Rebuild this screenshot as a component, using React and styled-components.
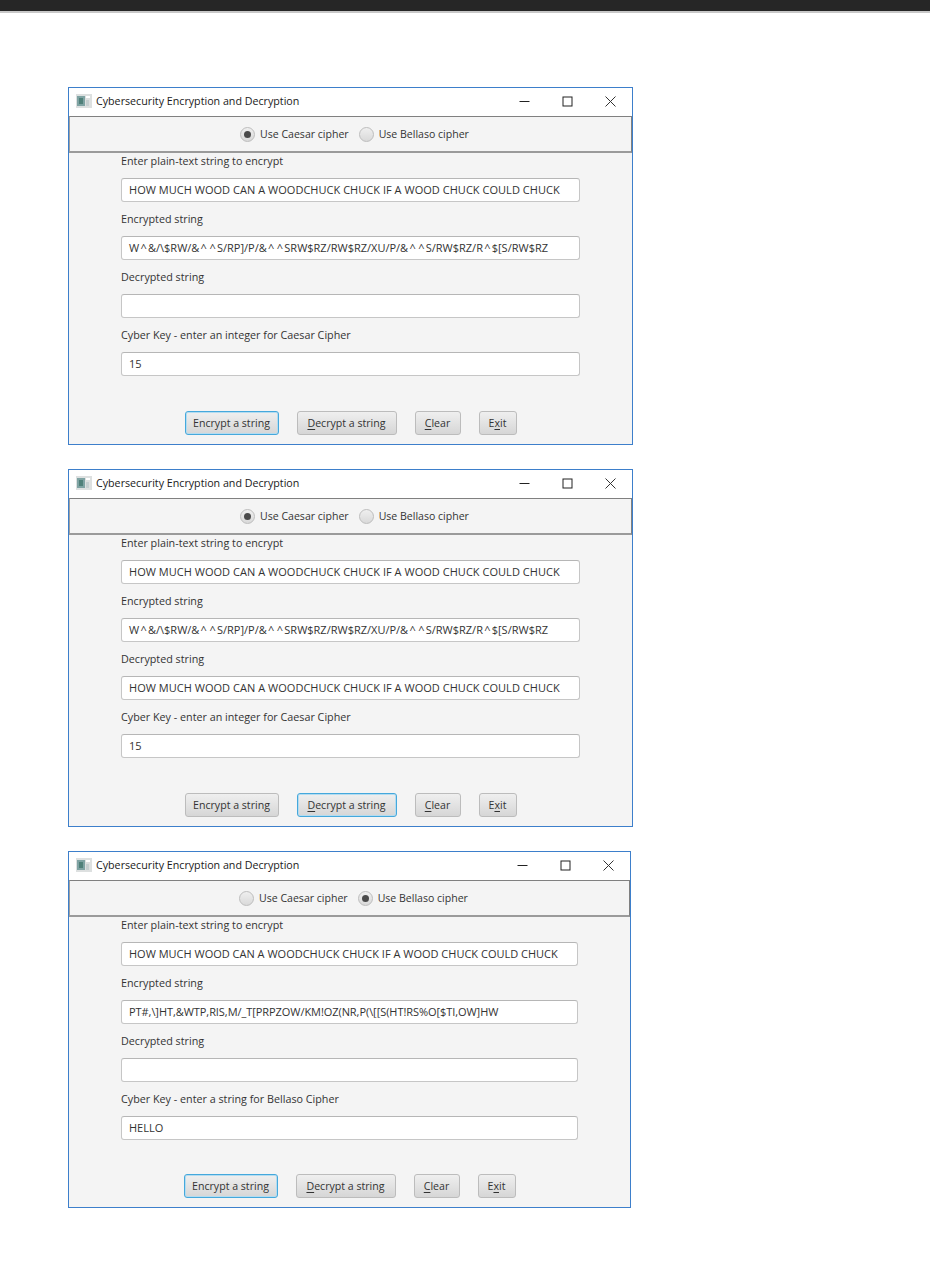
import React from 'react';
import styled, { createGlobalStyle } from 'styled-components';

const GlobalStyle = createGlobalStyle`
  html, body { margin: 0; padding: 0; background: #fff; }
  body { font-family: "Open Sans", "Noto Sans", "Liberation Sans", sans-serif; font-size: 11px; color: #333; }
`

const TopBar = styled.div`
  height: 11px;
  background: #262626;
  border-bottom: 2px solid #c8c8c8;
`
const Page = styled.div`
  display: flex;
  flex-direction: column;
  gap: 24px;
  padding: 74px 0 0 68px;
`
const Window = styled.div`
  display: flex;
  flex-direction: column;
  box-sizing: border-box;
  width: ${p => p.$width}px;
  height: ${p => p.$height}px;
  background: #f4f4f4;
  border: 1px solid #3d7fcb;
`
const TitleBar = styled.div`
  display: flex;
  align-items: center;
  box-sizing: border-box;
  height: 28px;
  padding: 0 0 2px 7px;
  background: #fff;
`
const Title = styled.span`
  margin-left: 4px;
  flex: 1;
  font-size: 10.7px;
  color: #1a1a1a;
`
const WinButton = styled.div`
  display: flex;
  align-items: center;
  justify-content: center;
  width: 43px;
  height: 26px;
`
const RadioBar = styled.div`
  display: flex;
  align-items: center;
  justify-content: center;
  gap: 10px;
  box-sizing: border-box;
  height: 37px;
  padding-left: 8px;
  border: 1px solid #808080;
  border-bottom: 2px solid #9a9a9a;
  border-left-color: #a0a0a0;
`
const RadioOption = styled.div`
  display: flex;
  align-items: center;
  gap: 5px;
  font-size: 10.55px;
`
const RadioCircle = styled.div`
  display: flex;
  align-items: center;
  justify-content: center;
  box-sizing: border-box;
  width: 15px;
  height: 15px;
  border-radius: 50%;
  border: 1px solid #bdbdbd;
  background: linear-gradient(#efefef, #d9d9d9);
`
const RadioDot = styled.div`
  width: 7px;
  height: 7px;
  border-radius: 50%;
  background: #4a4a4a;
`
const Form = styled.div`
  display: flex;
  flex-direction: column;
  gap: 9px;
  padding: 0 52px;
`
const FieldLabel = styled.div`
  height: 16px;
  line-height: 16px;
  font-size: 10.75px;
`
const Input = styled.div`
  box-sizing: border-box;
  height: 24px;
  line-height: 21px;
  padding-left: 7px;
  background: #fff;
  border: 1px solid #c6c6c6;
  border-top-color: #b6b6b6;
  border-radius: 3px;
  font-size: 11px;
  letter-spacing: ${p => p.$tracking || 0}px;
  white-space: nowrap;
  overflow: hidden;
`
const Caret = styled.span`
  margin: 0 1.25px;
`
const ButtonRow = styled.div`
  display: flex;
  justify-content: center;
  gap: 18px;
  margin-top: ${p => p.$top}px;
`
const Button = styled.div`
  display: flex;
  align-items: center;
  justify-content: center;
  box-sizing: border-box;
  width: ${p => p.$width}px;
  height: 24px;
  padding-bottom: 1px;
  border-radius: 3px;
  font-size: 10.6px;
  background: linear-gradient(#efefef, #d6d6d6);
  border: 1px solid ${p => (p.$focused ? '#45a8dc' : '#bcbcbc')};
  box-shadow: ${p => (p.$focused ? 'inset 0 0 0 1px #b4dcf0' : 'none')};
`
const Mnemonic = styled.span`
  text-decoration: underline;
  text-underline-offset: 2px;
`

const AppIcon = () => (
  <svg width="16" height="14" viewBox="0 0 16 14">
    <rect x="0" y="0" width="16" height="14" fill="#dde0e0" />
    <rect x="1" y="2" width="8" height="10" fill="#7fa3a3" />
    <rect x="3" y="4" width="4" height="6" fill="#4f8079" />
    <rect x="10" y="2" width="4" height="2" fill="#ffffff" />
    <rect x="10" y="6" width="3" height="6" fill="#c6cfd0" />
  </svg>
)

const Minimize = () => (
  <svg width="11" height="11" viewBox="0 0 11 11">
    <path d="M0.5 5.5H10.5" stroke="#222" strokeWidth="1" />
  </svg>
)
const Maximize = () => (
  <svg width="11" height="11" viewBox="0 0 11 11">
    <rect x="1" y="1" width="9" height="9" fill="none" stroke="#222" strokeWidth="1" />
  </svg>
)
const Close = () => (
  <svg width="11" height="11" viewBox="0 0 11 11">
    <path d="M0.5 0.5L10.5 10.5M10.5 0.5L0.5 10.5" stroke="#333" strokeWidth="1" />
  </svg>
)

const PLAIN = 'HOW MUCH WOOD CAN A WOODCHUCK CHUCK IF A WOOD CHUCK COULD CHUCK'
const CAESAR = 'W^&/\\$RW/&^^S/RP]/P/&^^SRW$RZ/RW$RZ/XU/P/&^^S/RW$RZ/R^$[S/RW$RZ'

const windows = [
  {
    width: 565, height: 358, buttonTop: 35, bellaso: false, focus: 'encrypt',
    plainTracking: 0.03, encrypted: CAESAR, encryptedTracking: 0, decrypted: '',
    keyLabel: 'Cyber Key - enter an integer for Caesar Cipher', keyValue: '15',
  },
  {
    width: 565, height: 358, buttonTop: 35, bellaso: false, focus: 'decrypt',
    plainTracking: 0.03, encrypted: CAESAR, encryptedTracking: 0, decrypted: PLAIN,
    keyLabel: 'Cyber Key - enter an integer for Caesar Cipher', keyValue: '15',
  },
  {
    width: 563, height: 357, buttonTop: 34, bellaso: true, focus: 'encrypt',
    plainTracking: 0, encrypted: 'PT#,\\]HT,&WTP,RIS,M/_T[PRPZOW/KM!OZ(NR,P(\\[[S(HT!RS%O[$TI,OW]HW', encryptedTracking: -0.06, decrypted: '',
    keyLabel: 'Cyber Key - enter a string for Bellaso Cipher', keyValue: 'HELLO',
  },
]

// the screenshot font has much wider carets than Open Sans
const withCarets = value =>
  value.split(/(\^)/).map((part, i) => (part === '^' ? <Caret key={i}>^</Caret> : part))

const CipherWindow = ({ data }) => {
  const fields = [
    ['Enter plain-text string to encrypt', PLAIN, data.plainTracking],
    ['Encrypted string', data.encrypted, data.encryptedTracking],
    ['Decrypted string', data.decrypted, data.plainTracking],
    [data.keyLabel, data.keyValue, 0],
  ]
  return (
    <Window $width={data.width} $height={data.height}>
      <TitleBar>
        <AppIcon />
        <Title>Cybersecurity Encryption and Decryption</Title>
        <WinButton><Minimize /></WinButton>
        <WinButton><Maximize /></WinButton>
        <WinButton><Close /></WinButton>
      </TitleBar>
      <RadioBar>
        <RadioOption>
          <RadioCircle>{!data.bellaso && <RadioDot />}</RadioCircle>
          Use Caesar cipher
        </RadioOption>
        <RadioOption>
          <RadioCircle>{data.bellaso && <RadioDot />}</RadioCircle>
          Use Bellaso cipher
        </RadioOption>
      </RadioBar>
      <Form>
        {fields.map(([label, value, tracking]) => (
          <React.Fragment key={label}>
            <FieldLabel>{label}</FieldLabel>
            <Input $tracking={tracking}>{withCarets(value)}</Input>
          </React.Fragment>
        ))}
      </Form>
      <ButtonRow $top={data.buttonTop}>
        <Button $width={94} $focused={data.focus === 'encrypt'}>Encrypt a string</Button>
        <Button $width={100} $focused={data.focus === 'decrypt'}><Mnemonic>D</Mnemonic>ecrypt a string</Button>
        <Button $width={46}><Mnemonic>C</Mnemonic>lear</Button>
        <Button $width={38}>E<Mnemonic>x</Mnemonic>it</Button>
      </ButtonRow>
    </Window>
  )
}

const App = () => (
  <>
    <GlobalStyle />
    <TopBar />
    <Page>
      {windows.map((w, i) => <CipherWindow key={i} data={w} />)}
    </Page>
  </>
)

export default App;
